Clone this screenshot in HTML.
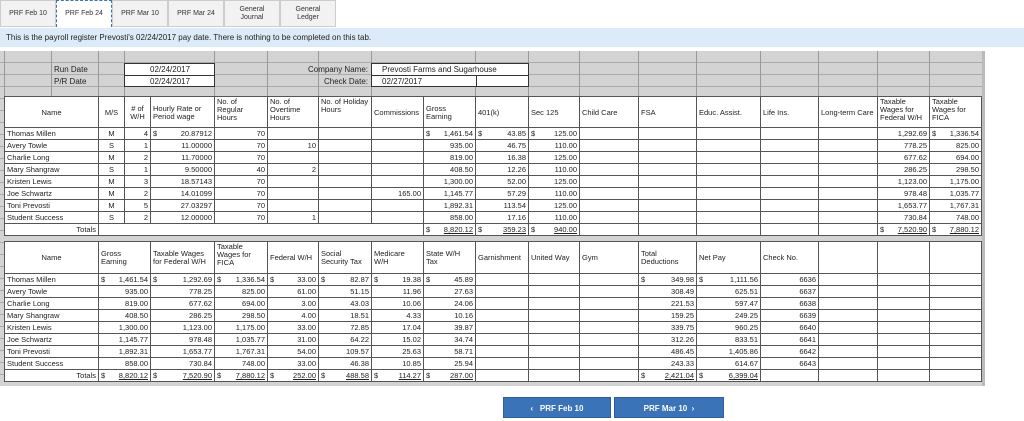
<!DOCTYPE html>
<html><head><meta charset="utf-8">
<style>
*{margin:0;padding:0;box-sizing:border-box}
body{width:1024px;height:421px;background:#fff;position:relative;overflow:hidden;font-family:"Liberation Sans",Arial,sans-serif;color:#222}
.tab{position:absolute;top:0;height:27px;width:56px;background:#f2f2f2;border:1px solid #ccc;font-size:7px;color:#333;text-align:center;display:flex;align-items:center;justify-content:center;line-height:8px}
.tab.act{background:#fff;border:1px dashed #3a6fb5;border-bottom:none}
.info{position:absolute;top:28px;left:0;width:1024px;height:19px;background:#dcebf7;font-size:8px;line-height:19px;padding-left:6px;color:#222}
.grid{position:absolute;top:51px;left:0;width:985px;height:335px;background:#d3d3d3;border-right:3px solid #bbb;
background-image:repeating-linear-gradient(to bottom,transparent 0,transparent 11px,#aaa 11px,#aaa 12px);}
.vl{position:absolute;top:51px;width:1px;height:45px;background:#999}
.lbl{position:absolute;font-size:8px;line-height:11px;height:12px}
.box{position:absolute;background:#fff;border:1px solid #333;font-size:8px;line-height:10px;padding-left:6px}
table{position:absolute;left:4px;border-collapse:collapse;table-layout:fixed;background:#fff;font-size:7.5px}
td{border:1px solid #555;padding:0 2px;height:12px;line-height:10px;white-space:nowrap;overflow:hidden;text-align:right;vertical-align:middle}
tr.h td{text-align:left;vertical-align:top;line-height:8px;padding-top:1px;white-space:normal}
tr.h td.c{text-align:center;vertical-align:middle}
td.n{text-align:left}
td.m{text-align:center}
.d{float:left}
u{text-decoration:underline}
.btn{position:absolute;top:397px;height:21px;background:#3a73b8;color:#fff;font-size:8px;font-weight:bold;text-align:center;line-height:21px;border:1px solid #2e5f9c}
</style></head><body>
<div class="tab" style="left:0">PRF Feb 10</div>
<div class="tab act" style="left:56px">PRF Feb 24</div>
<div class="tab" style="left:112px">PRF Mar 10</div>
<div class="tab" style="left:168px">PRF Mar 24</div>
<div class="tab" style="left:224px">General<br>Journal</div>
<div class="tab" style="left:280px">General<br>Ledger</div>
<div class="info">This is the payroll register Prevosti's 02/24/2017 pay date. There is nothing to be completed on this tab.</div>

<div class="grid"></div>
<div class="vl" style="left:4px"></div><div class="vl" style="left:51px"></div><div class="vl" style="left:98px"></div><div class="vl" style="left:124px"></div><div class="vl" style="left:214px"></div><div class="vl" style="left:267px"></div><div class="vl" style="left:318px"></div><div class="vl" style="left:371px"></div><div class="vl" style="left:475px"></div><div class="vl" style="left:528px"></div><div class="vl" style="left:579px"></div><div class="vl" style="left:638px"></div><div class="vl" style="left:696px"></div><div class="vl" style="left:760px"></div><div class="vl" style="left:818px"></div><div class="vl" style="left:877px"></div><div class="vl" style="left:929px"></div>
<div class="lbl" style="left:54px;top:64px">Run Date</div>
<div class="lbl" style="left:54px;top:76px">P/R Date</div>
<div class="box" style="left:124px;top:63px;width:91px;height:24px;padding:0"><div style="height:12px;line-height:11px;padding-left:25px;border-bottom:1px solid #333">02/24/2017</div><div style="line-height:11px;padding-left:25px">02/24/2017</div></div>
<div class="lbl" style="left:280px;width:88px;top:64px;text-align:right">Company Name:</div>
<div class="lbl" style="left:280px;width:88px;top:76px;text-align:right">Check Date:</div>
<div class="box" style="left:371px;top:63px;width:158px;height:24px;padding:0"><div style="height:12px;line-height:11px;padding-left:10px;border-bottom:1px solid #333">Prevosti Farms and Sugarhouse</div><div style="line-height:11px;padding-left:10px;width:105px;border-right:1px solid #333">02/27/2017</div></div>

<table style="top:96px;width:977px">
<colgroup><col style="width:94px"><col style="width:26px"><col style="width:26px"><col style="width:64px"><col style="width:53px"><col style="width:51px"><col style="width:53px"><col style="width:52px"><col style="width:52px"><col style="width:53px"><col style="width:51px"><col style="width:59px"><col style="width:58px"><col style="width:64px"><col style="width:58px"><col style="width:59px"><col style="width:52px"><col style="width:52px"></colgroup>
<tr class="h" style="height:31px"><td class="c">Name</td><td class="c">M/S</td><td class="c"># of W/H</td><td style="vertical-align:middle">Hourly Rate or Period wage</td><td>No. of Regular Hours</td><td>No. of Overtime Hours</td><td>No. of Holiday Hours</td><td style="vertical-align:middle">Commissions</td><td style="vertical-align:middle">Gross Earning</td><td style="vertical-align:middle">401(k)</td><td style="vertical-align:middle">Sec 125</td><td style="vertical-align:middle">Child Care</td><td style="vertical-align:middle">FSA</td><td style="vertical-align:middle">Educ. Assist.</td><td style="vertical-align:middle">Life Ins.</td><td style="vertical-align:middle">Long-term Care</td><td>Taxable Wages for Federal W/H</td><td>Taxable Wages for FICA</td></tr>
<tr><td class="n">Thomas Millen</td><td class="m">M</td><td>4</td><td><span class="d">$</span>20.87912</td><td>70</td><td></td><td></td><td></td><td><span class="d">$</span>1,461.54</td><td><span class="d">$</span>43.85</td><td><span class="d">$</span>125.00</td><td></td><td></td><td></td><td></td><td></td><td>1,292.69</td><td><span class="d">$</span>1,336.54</td></tr>
<tr><td class="n">Avery Towle</td><td class="m">S</td><td>1</td><td>11.00000</td><td>70</td><td>10</td><td></td><td></td><td>935.00</td><td>46.75</td><td>110.00</td><td></td><td></td><td></td><td></td><td></td><td>778.25</td><td>825.00</td></tr>
<tr><td class="n">Charlie Long</td><td class="m">M</td><td>2</td><td>11.70000</td><td>70</td><td></td><td></td><td></td><td>819.00</td><td>16.38</td><td>125.00</td><td></td><td></td><td></td><td></td><td></td><td>677.62</td><td>694.00</td></tr>
<tr><td class="n">Mary Shangraw</td><td class="m">S</td><td>1</td><td>9.50000</td><td>40</td><td>2</td><td></td><td></td><td>408.50</td><td>12.26</td><td>110.00</td><td></td><td></td><td></td><td></td><td></td><td>286.25</td><td>298.50</td></tr>
<tr><td class="n">Kristen Lewis</td><td class="m">M</td><td>3</td><td>18.57143</td><td>70</td><td></td><td></td><td></td><td>1,300.00</td><td>52.00</td><td>125.00</td><td></td><td></td><td></td><td></td><td></td><td>1,123.00</td><td>1,175.00</td></tr>
<tr><td class="n">Joe Schwartz</td><td class="m">M</td><td>2</td><td>14.01099</td><td>70</td><td></td><td></td><td>165.00</td><td>1,145.77</td><td>57.29</td><td>110.00</td><td></td><td></td><td></td><td></td><td></td><td>978.48</td><td>1,035.77</td></tr>
<tr><td class="n">Toni Prevosti</td><td class="m">M</td><td>5</td><td>27.03297</td><td>70</td><td></td><td></td><td></td><td>1,892.31</td><td>113.54</td><td>125.00</td><td></td><td></td><td></td><td></td><td></td><td>1,653.77</td><td>1,767.31</td></tr>
<tr><td class="n">Student Success</td><td class="m">S</td><td>2</td><td>12.00000</td><td>70</td><td>1</td><td></td><td></td><td>858.00</td><td>17.16</td><td>110.00</td><td></td><td></td><td></td><td></td><td></td><td>730.84</td><td>748.00</td></tr>
<tr><td>Totals</td><td colspan="7"></td><td><span class="d">$</span><u>8,820.12</u></td><td><span class="d">$</span><u>359.23</u></td><td><span class="d">$</span><u>940.00</u></td><td></td><td></td><td></td><td></td><td></td><td><span class="d">$</span><u>7,520.90</u></td><td><span class="d">$</span><u>7,880.12</u></td></tr>
</table>

<table style="top:241px;width:977px">
<colgroup><col style="width:94px"><col style="width:52px"><col style="width:64px"><col style="width:53px"><col style="width:51px"><col style="width:53px"><col style="width:52px"><col style="width:52px"><col style="width:53px"><col style="width:51px"><col style="width:59px"><col style="width:58px"><col style="width:64px"><col style="width:58px"><col style="width:59px"><col style="width:52px"><col style="width:52px"></colgroup>
<tr class="h" style="height:32px"><td class="c">Name</td><td style="vertical-align:middle">Gross Earning</td><td style="vertical-align:middle">Taxable Wages for Federal W/H</td><td>Taxable Wages for FICA</td><td style="vertical-align:middle">Federal W/H</td><td style="vertical-align:middle">Social Security Tax</td><td style="vertical-align:middle">Medicare W/H</td><td style="vertical-align:middle">State W/H Tax</td><td style="vertical-align:middle">Garnishment</td><td style="vertical-align:middle">United Way</td><td style="vertical-align:middle">Gym</td><td style="vertical-align:middle">Total Deductions</td><td style="vertical-align:middle">Net Pay</td><td style="vertical-align:middle">Check No.</td><td></td><td></td><td></td></tr>
<tr><td class="n">Thomas Millen</td><td><span class="d">$</span>1,461.54</td><td><span class="d">$</span>1,292.69</td><td><span class="d">$</span>1,336.54</td><td><span class="d">$</span>33.00</td><td><span class="d">$</span>82.87</td><td><span class="d">$</span>19.38</td><td><span class="d">$</span>45.89</td><td></td><td></td><td></td><td><span class="d">$</span>349.98</td><td><span class="d">$</span>1,111.56</td><td>6636</td><td></td><td></td><td></td></tr>
<tr><td class="n">Avery Towle</td><td>935.00</td><td>778.25</td><td>825.00</td><td>61.00</td><td>51.15</td><td>11.96</td><td>27.63</td><td></td><td></td><td></td><td>308.49</td><td>625.51</td><td>6637</td><td></td><td></td><td></td></tr>
<tr><td class="n">Charlie Long</td><td>819.00</td><td>677.62</td><td>694.00</td><td>3.00</td><td>43.03</td><td>10.06</td><td>24.06</td><td></td><td></td><td></td><td>221.53</td><td>597.47</td><td>6638</td><td></td><td></td><td></td></tr>
<tr><td class="n">Mary Shangraw</td><td>408.50</td><td>286.25</td><td>298.50</td><td>4.00</td><td>18.51</td><td>4.33</td><td>10.16</td><td></td><td></td><td></td><td>159.25</td><td>249.25</td><td>6639</td><td></td><td></td><td></td></tr>
<tr><td class="n">Kristen Lewis</td><td>1,300.00</td><td>1,123.00</td><td>1,175.00</td><td>33.00</td><td>72.85</td><td>17.04</td><td>39.87</td><td></td><td></td><td></td><td>339.75</td><td>960.25</td><td>6640</td><td></td><td></td><td></td></tr>
<tr><td class="n">Joe Schwartz</td><td>1,145.77</td><td>978.48</td><td>1,035.77</td><td>31.00</td><td>64.22</td><td>15.02</td><td>34.74</td><td></td><td></td><td></td><td>312.26</td><td>833.51</td><td>6641</td><td></td><td></td><td></td></tr>
<tr><td class="n">Toni Prevosti</td><td>1,892.31</td><td>1,653.77</td><td>1,767.31</td><td>54.00</td><td>109.57</td><td>25.63</td><td>58.71</td><td></td><td></td><td></td><td>486.45</td><td>1,405.86</td><td>6642</td><td></td><td></td><td></td></tr>
<tr><td class="n">Student Success</td><td>858.00</td><td>730.84</td><td>748.00</td><td>33.00</td><td>46.38</td><td>10.85</td><td>25.94</td><td></td><td></td><td></td><td>243.33</td><td>614.67</td><td>6643</td><td></td><td></td><td></td></tr>
<tr><td>Totals</td><td><span class="d">$</span><u>8,820.12</u></td><td><span class="d">$</span><u>7,520.90</u></td><td><span class="d">$</span><u>7,880.12</u></td><td><span class="d">$</span><u>252.00</u></td><td><span class="d">$</span><u>488.58</u></td><td><span class="d">$</span><u>114.27</u></td><td><span class="d">$</span><u>287.00</u></td><td></td><td></td><td></td><td><span class="d">$</span><u>2,421.04</u></td><td><span class="d">$</span><u>6,399.04</u></td><td></td><td></td><td></td><td></td></tr>
</table>

<div class="btn" style="left:503px;width:108px">&#x2039;&nbsp;&nbsp; PRF Feb 10</div>
<div class="btn" style="left:614px;width:110px">PRF Mar 10 &nbsp;&#x203A;</div>
</body></html>
